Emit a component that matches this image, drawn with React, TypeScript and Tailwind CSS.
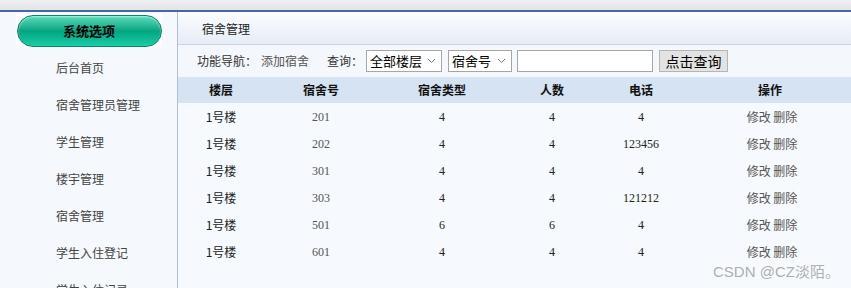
import React from 'react'

const MENU = ['后台首页', '宿舍管理员管理', '学生管理', '楼宇管理', '宿舍管理', '学生入住登记', '学生入住记录']

type Room = { floor: string; no: string; type: string; count: string; phone: string }

const ROOMS: Room[] = [
  { floor: '1号楼', no: '201', type: '4', count: '4', phone: '4' },
  { floor: '1号楼', no: '202', type: '4', count: '4', phone: '123456' },
  { floor: '1号楼', no: '301', type: '4', count: '4', phone: '4' },
  { floor: '1号楼', no: '303', type: '4', count: '4', phone: '121212' },
  { floor: '1号楼', no: '501', type: '6', count: '6', phone: '4' },
  { floor: '1号楼', no: '601', type: '4', count: '4', phone: '4' },
]

const COLS = 'grid grid-cols-[86px_114px_128px_92px_86px_172px]'

function Chevron() {
  return (
    <svg width="9" height="6" viewBox="0 0 9 6" className="ml-auto mr-[5px] shrink-0">
      <path d="M1 1 L4.5 4.5 L8 1" fill="none" stroke="#777" strokeWidth="1" />
    </svg>
  )
}

export default function App() {
  return (
    <div className="relative h-[288px] w-[851px] overflow-hidden bg-[#f6f9fd] font-['Noto_Sans_CJK_SC',sans-serif] text-[12px] text-[#333]">
      {/* top strip */}
      <div className="h-[12px] border-b-2 border-[#47679f] bg-gradient-to-b from-[#eff0f1] to-[#e2e4e6]" />

      <div className="flex h-[276px]">
        {/* sidebar */}
        <aside className="w-[178px] shrink-0 border-r border-[#a9c0db] bg-[#f5f8fc]">
          <div className="ml-[16px] mt-[2px] flex h-[33px] w-[146px] items-center justify-center bg-white">
            <div className="flex h-[32px] w-[145px] items-center justify-center rounded-full border border-[#0b8467] bg-gradient-to-b from-[#52dcbc] via-[#02a582] to-[#17cfa6] shadow-[inset_0_1px_2px_rgba(255,255,255,0.6)]">
              <span className="text-[13px] font-bold text-black">系统选项</span>
            </div>
          </div>
          <ul className="mt-[2px]">
            {MENU.map((m) => (
              <li key={m} className="flex h-[37px] items-center whitespace-nowrap pl-[56px] text-[12px] text-[#444]">
                {m}
              </li>
            ))}
          </ul>
        </aside>

        {/* main */}
        <main className="flex-1 overflow-hidden">
          <div className="flex h-[33px] items-center border-b border-[#c8d5e3] bg-gradient-to-b from-[#fbfcfe] to-[#e6edf6] pl-[24px] pt-[1px] text-[12px] text-[#222]">
            宿舍管理
          </div>

          <div className="flex h-[32px] items-center whitespace-nowrap bg-[#f4f7fb] pl-[19px] text-[12px]">
            <span className="text-[#333]">功能导航：</span>
            <span className="ml-[4px] text-[#555]">添加宿舍</span>
            <span className="ml-[18px] text-[#333]">查询：</span>
            <div className="ml-[3px] flex h-[22px] w-[76px] items-center border border-[#a6a6a6] bg-white pl-[3px] text-[13px] text-black">
              全部楼层
              <Chevron />
            </div>
            <div className="ml-[6px] flex h-[22px] w-[64px] items-center border border-[#a6a6a6] bg-white pl-[3px] text-[13px] text-black">
              宿舍号
              <Chevron />
            </div>
            <div className="ml-[5px] h-[22px] w-[136px] border border-[#a6a6a6] bg-white" />
            <button
              type="button"
              className="ml-[6px] flex h-[22px] w-[69px] items-center justify-center border border-[#b5b5b5] bg-[#e3e3e3] text-[14px] text-black"
            >
              点击查询
            </button>
          </div>

          <div className={`${COLS} h-[26px] items-center bg-[#d5e3f3] text-center text-[12px] font-bold text-[#111]`}>
            <span>楼层</span>
            <span>宿舍号</span>
            <span>宿舍类型</span>
            <span>人数</span>
            <span>电话</span>
            <span>操作</span>
          </div>

          {ROOMS.map((r) => (
            <div
              key={r.no}
              className={`${COLS} h-[27px] items-center text-center font-['Liberation_Serif','Noto_Sans_CJK_SC',serif] text-[12px] text-[#222]`}
            >
              <span className="font-['Noto_Sans_CJK_SC',sans-serif]">{r.floor}</span>
              <span className="text-[#555]">{r.no}</span>
              <span>{r.type}</span>
              <span>{r.count}</span>
              <span>{r.phone}</span>
              <span className="pl-[4px] font-['Noto_Sans_CJK_SC',sans-serif] text-[#555]">
                修改 删除
              </span>
            </div>
          ))}
        </main>
      </div>

      {/* watermark */}
      <div className="absolute left-[713px] top-[261px] whitespace-nowrap font-['Liberation_Sans','Noto_Sans_CJK_SC',sans-serif] text-[15px] text-[#9a9a9a]/80">
        CSDN @CZ淡陌。
      </div>
    </div>
  )
}
